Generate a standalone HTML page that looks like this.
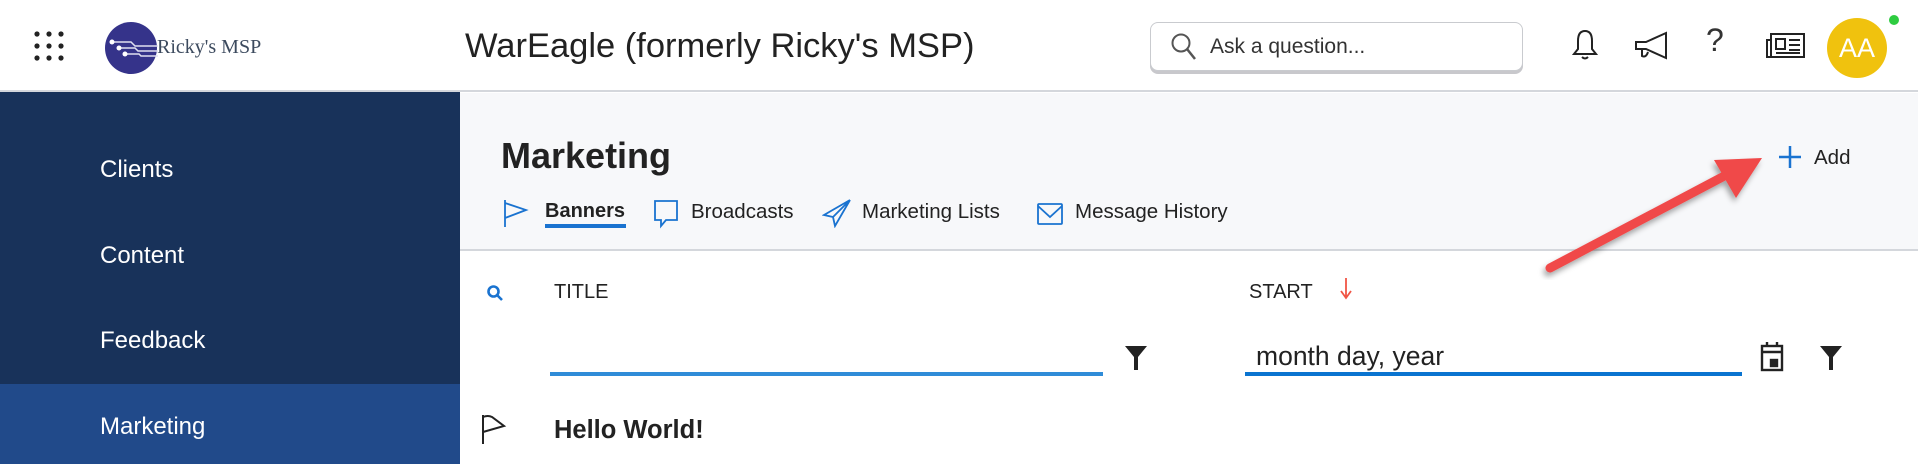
<!DOCTYPE html>
<html><head><meta charset="utf-8"><style>
*{margin:0;padding:0;box-sizing:border-box}
body{width:1918px;height:464px;overflow:hidden;font-family:"Liberation Sans",sans-serif;background:#fff;position:relative;color:#222}
.abs{position:absolute}
.hdr{left:0;top:0;width:1918px;height:92px;background:#fff;border-bottom:2px solid #d4d7dc}
.side{left:0;top:92px;width:460px;height:372px;background:#18325a}
.sel{left:0;top:384px;width:460px;height:80px;background:#214a8a}
.si{left:100px;color:#fff;font-size:24px}
.content{left:460px;top:93px;width:1458px;height:158px;background:#f7f8fa;border-bottom:2px solid #d4d7dc}
.tab{font-size:20.5px;color:#222;top:200px}
</style></head><body>
<div class="abs hdr"></div>
<svg class="abs" style="left:30px;top:28px" width="40" height="40">
<g fill="#222"><circle cx="7" cy="6" r="2.6"/><circle cx="19" cy="6" r="2.6"/><circle cx="31" cy="6" r="2.6"/><circle cx="7" cy="18" r="2.6"/><circle cx="19" cy="18" r="2.6"/><circle cx="31" cy="18" r="2.6"/><circle cx="7" cy="30" r="2.6"/><circle cx="19" cy="30" r="2.6"/><circle cx="31" cy="30" r="2.6"/></g></svg>
<svg class="abs" style="left:104px;top:20px" width="54" height="56">
<circle cx="27" cy="28" r="26" fill="#35338a"/>
<g stroke="#e0e0f0" stroke-width="1.5" fill="none"><path d="M8 22 H27 L31 26 H54"/><path d="M15 28 H31 L34 31 H54"/><path d="M21 34 H35 L37 36 H54"/></g>
<g fill="#fff"><circle cx="8" cy="22" r="2.5"/><circle cx="15" cy="28" r="2.5"/><circle cx="21" cy="34" r="2.5"/></g></svg>
<div class="abs" style="left:157px;top:36px;font-family:'Liberation Serif',serif;font-size:20px;color:#3c4a5e">Ricky's MSP</div>
<div class="abs" style="left:465px;top:27px;font-size:34.5px;color:#222">WarEagle (formerly Ricky's MSP)</div>
<div class="abs" style="left:1150px;top:22px;width:373px;height:49px;border:1px solid #c9cbcf;border-radius:8px;box-shadow:0 3px 0 #c8c8cc;background:#fff"></div>
<svg class="abs" style="left:1170px;top:32px" width="28" height="30"><circle cx="11" cy="11" r="8.5" stroke="#555" stroke-width="2" fill="none"/><path d="M17 17 L25 27" stroke="#555" stroke-width="2.5"/></svg>
<div class="abs" style="left:1210px;top:35px;font-size:21px;color:#333">Ask a question...</div>
<svg class="abs" style="left:1570px;top:28px" width="30" height="34" fill="none" stroke="#222" stroke-width="2"><path d="M15 3 Q8 3 8 13 L8 21 L4 26 H26 L22 21 L22 13 Q22 3 15 3Z"/><path d="M12 29 Q15 32 18 29"/></svg>
<svg class="abs" style="left:1632px;top:30px" width="40" height="32" fill="none" stroke="#222" stroke-width="2"><path d="M4 12 H14 L34 3 V28 L14 19 H4Z"/><path d="M10 19 L10 26 Q14 28 16 22"/></svg>
<div class="abs" style="left:1706px;top:22px;font-size:32px;color:#333">?</div>
<svg class="abs" style="left:1766px;top:32px" width="40" height="28" fill="none" stroke="#222" stroke-width="2"><rect x="5" y="2" width="33" height="23"/><path d="M5 8 H1 V25 H5"/><rect x="10" y="7" width="9" height="10"/><path d="M23 8 H34 M23 13 H34 M23 18 H34 M10 21 H34"/></svg>
<div class="abs" style="left:1827px;top:18px;width:60px;height:60px;border-radius:50%;background:#f0c20e;color:#fff;font-size:27px;text-align:center;line-height:60px">AA</div>
<div class="abs" style="left:1889px;top:15px;width:10px;height:10px;border-radius:50%;background:#2ecc40"></div>

<div class="abs side"></div>
<div class="abs sel"></div>
<div class="abs si" style="top:156px">Clients</div>
<div class="abs si" style="top:242px">Content</div>
<div class="abs si" style="top:327px">Feedback</div>
<div class="abs si" style="top:413px">Marketing</div>

<div class="abs content"></div>
<div class="abs" style="left:501px;top:135px;font-size:36px;font-weight:bold;color:#222">Marketing</div>
<svg class="abs" style="left:1778px;top:145px" width="24" height="24"><path d="M12 1 V23 M1 12 H23" stroke="#1a73d0" stroke-width="2.5"/></svg>
<div class="abs" style="left:1814px;top:146px;font-size:20.5px;color:#222">Add</div>

<svg class="abs" style="left:502px;top:198px" width="30" height="30" fill="none" stroke="#1a73d0" stroke-width="1.8"><path d="M3 2 V29 M3 5 L24 12 L3 20"/></svg>
<div class="abs tab" style="left:545px;font-weight:bold;font-size:20px">Banners</div>
<div class="abs" style="left:545px;top:224px;width:81px;height:4px;background:#1a73d0"></div>
<svg class="abs" style="left:652px;top:199px" width="28" height="30" fill="none" stroke="#1a73d0" stroke-width="1.8"><path d="M3 2 H25 V21 H14 L9 27 V21 H3Z"/></svg>
<div class="abs tab" style="left:691px">Broadcasts</div>
<svg class="abs" style="left:822px;top:198px" width="30" height="30" fill="none" stroke="#1a73d0" stroke-width="1.8"><path d="M28 2 L2 17 L11 19 L28 2 L13 28 L11 19"/></svg>
<div class="abs tab" style="left:862px">Marketing Lists</div>
<svg class="abs" style="left:1036px;top:202px" width="28" height="24" fill="none" stroke="#1a73d0" stroke-width="1.8"><rect x="2" y="2" width="24" height="20" rx="1"/><path d="M2 4 L14 15 L26 4"/></svg>
<div class="abs tab" style="left:1075px">Message History</div>

<svg class="abs" style="left:486px;top:284px" width="18" height="18" fill="none" stroke="#1a73d0" stroke-width="2.6"><circle cx="7.5" cy="7.5" r="5"/><path d="M11 11 L16 16"/></svg>
<div class="abs" style="left:554px;top:281px;font-size:20px;color:#222">TITLE</div>
<div class="abs" style="left:1249px;top:281px;font-size:20px;color:#222">START</div>
<svg class="abs" style="left:1339px;top:277px" width="14" height="24"><path d="M7 1 V20 M2 14 L7 21 L12 14" stroke="#f05545" stroke-width="1.8" fill="none"/></svg>
<div class="abs" style="left:550px;top:372px;width:553px;height:4px;background:#2f8cd8"></div>
<svg class="abs" style="left:1124px;top:344px" width="24" height="30"><path d="M1 2 H23 L14 13 V26 L10 26 V13Z" fill="#222"/></svg>
<div class="abs" style="left:1256px;top:341px;font-size:26.5px;color:#222">month day, year</div>
<div class="abs" style="left:1245px;top:372px;width:497px;height:4px;background:#0a74d0"></div>
<svg class="abs" style="left:1759px;top:340px" width="26" height="32" fill="none" stroke="#222" stroke-width="2.4"><rect x="3" y="6" width="20" height="24"/><path d="M3 12 H23 M8 2 V7 M18 2 V7"/><rect x="12" y="20" width="6" height="6" fill="#222"/></svg>
<svg class="abs" style="left:1819px;top:344px" width="24" height="30"><path d="M1 2 H23 L14 13 V26 L10 26 V13Z" fill="#222"/></svg>
<svg class="abs" style="left:480px;top:413px" width="30" height="32" fill="none" stroke="#222" stroke-width="2"><path d="M3 2 V31 M3 4 Q8 2 12 4 L24 13 L3 19"/></svg>
<div class="abs" style="left:554px;top:416px;font-size:25.5px;font-weight:bold;color:#222">Hello World!</div>

<svg class="abs" style="left:1530px;top:140px" width="250" height="140">
<defs><filter id="s" x="-20%" y="-20%" width="140%" height="140%"><feDropShadow dx="-2" dy="4" stdDeviation="3" flood-color="#000" flood-opacity="0.35"/></filter></defs>
<g filter="url(#s)"><path d="M20 128 L200 33" stroke="#f04848" stroke-width="9" stroke-linecap="round"/><path d="M232 18 L184 20 L206 58Z" fill="#f04848"/></g>
</svg>
</body></html>
